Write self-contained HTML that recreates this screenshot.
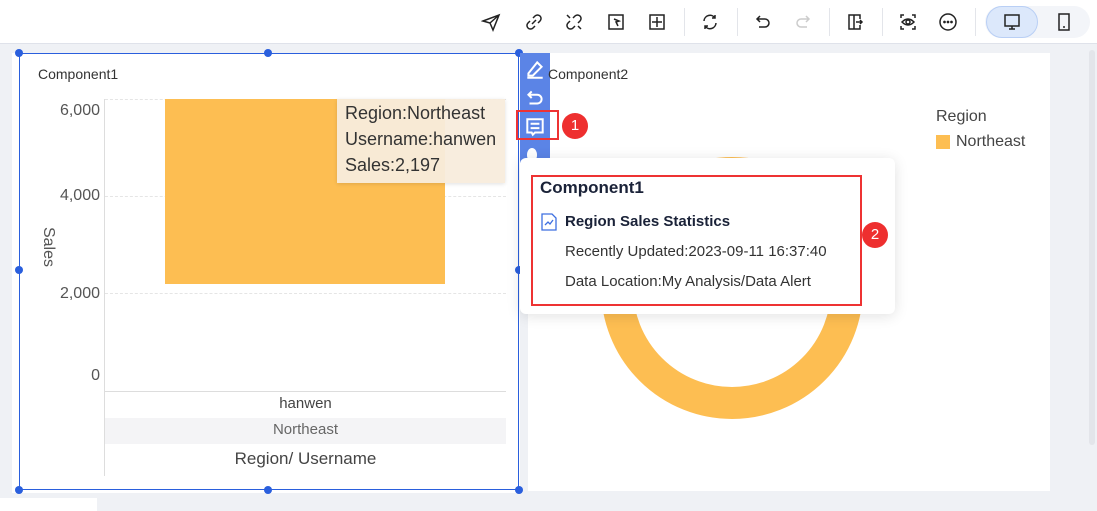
<!DOCTYPE html>
<html><head><style>
*{margin:0;padding:0;box-sizing:border-box}
body{width:1097px;height:511px;background:#eff1f5;font-family:"Liberation Sans",sans-serif;position:relative;overflow:hidden}
.abs{position:absolute}
.top{left:0;top:0;width:1097px;height:44px;background:#fff;border-bottom:1px solid #dfe2ea}
.ic{position:absolute;top:12px;width:20px;height:20px}
.sep{position:absolute;top:8px;width:1px;height:28px;background:#e3e5ea}
.t{color:#333;font-size:14px}
.h{width:8px;height:8px;border-radius:50%;background:#2a5fdd;position:absolute}
</style></head><body>
<div class="abs top">
<svg class="ic" style="left:481px" viewBox="0 0 20 20" fill="none" stroke="#222" stroke-width="1.5"><path d="M2 9 L18 3 L12 18 L9 11 Z M9 11 L18 3"/></svg>
<svg class="ic" style="left:524px" viewBox="0 0 20 20" fill="none" stroke="#222" stroke-width="1.5"><path d="M8 12 L12 8 M9 6 L11 4 a3 3 0 0 1 5 5 L14 11 M11 14 L9 16 a3 3 0 0 1 -5 -5 L6 9"/></svg>
<svg class="ic" style="left:564px" viewBox="0 0 20 20" fill="none" stroke="#222" stroke-width="1.5"><path d="M9 6 L11 4 a3 3 0 0 1 5 5 L14 11 M11 14 L9 16 a3 3 0 0 1 -5 -5 L6 9 M3 3 L6 6 M14 14 L17 17"/></svg>
<svg class="ic" style="left:606px" viewBox="0 0 20 20" fill="none" stroke="#222" stroke-width="1.5"><rect x="3" y="3" width="14" height="14"/><path d="M8 7 L13 9 L10 10 L12 14"/></svg>
<svg class="ic" style="left:647px" viewBox="0 0 20 20" fill="none" stroke="#222" stroke-width="1.5"><rect x="3" y="3" width="14" height="14"/><path d="M10 5 V15 M5 10 H15"/></svg>
<div class="sep" style="left:684px"></div>
<svg class="ic" style="left:700px" viewBox="0 0 20 20" fill="none" stroke="#222" stroke-width="1.5"><path d="M4 9 a6 6 0 0 1 11 -3 M16 11 a6 6 0 0 1 -11 3 M15 3 V6 H12 M5 17 V14 H8"/></svg>
<div class="sep" style="left:737px"></div>
<svg class="ic" style="left:753px" viewBox="0 0 20 20" fill="none" stroke="#222" stroke-width="1.5"><path d="M7 4 L4 7 L7 10 M4 7 H12 a4 4 0 0 1 0 8 H6"/></svg>
<svg class="ic" style="left:793px" viewBox="0 0 20 20" fill="none" stroke="#ccc" stroke-width="1.5"><path d="M13 4 L16 7 L13 10 M16 7 H8 a4 4 0 0 0 0 8 H14"/></svg>
<div class="sep" style="left:829px"></div>
<svg class="ic" style="left:845px" viewBox="0 0 20 20" fill="none" stroke="#222" stroke-width="1.5"><path d="M4 3 V17 H9 V3 Z M9 3 H15 V7 M9 17 H15 V13 M11 10 H17 M15 8 L17 10 L15 12"/></svg>
<div class="sep" style="left:882px"></div>
<svg class="ic" style="left:898px" viewBox="0 0 20 20" fill="none" stroke="#222" stroke-width="1.5"><path d="M3 6 V3 H6 M14 3 H17 V6 M17 14 V17 H14 M6 17 H3 V14 M4 10 Q10 4 16 10 Q10 16 4 10 Z"/><circle cx="10" cy="10" r="2"/></svg>
<svg class="ic" style="left:938px" viewBox="0 0 20 20" fill="none" stroke="#222" stroke-width="1.5"><circle cx="10" cy="10" r="8"/><circle cx="6.5" cy="10" r=".6" fill="#222"/><circle cx="10" cy="10" r=".6" fill="#222"/><circle cx="13.5" cy="10" r=".6" fill="#222"/></svg>
<div class="sep" style="left:975px"></div>
<div class="abs" style="left:985px;top:6px;width:105px;height:32px;border-radius:16px;background:#f3f5f9"></div>
<div class="abs" style="left:986px;top:6px;width:52px;height:32px;border-radius:16px;background:#dce8fb;border:1px solid #b9cff5"></div>
<svg class="ic" style="left:1002px" viewBox="0 0 20 20" fill="none" stroke="#222" stroke-width="1.5"><rect x="3" y="3" width="14" height="11"/><path d="M10 14 V17 M7 17 H13"/></svg>
<svg class="ic" style="left:1054px" viewBox="0 0 20 20" fill="none" stroke="#222" stroke-width="1.5"><rect x="5" y="2" width="10" height="16"/><path d="M9 15 H11"/></svg>
</div>
<div class="abs" style="left:12px;top:53px;width:508px;height:440px;background:#fff"></div>
<div class="abs" style="left:528px;top:53px;width:522px;height:438px;background:#fff"></div>
<div class="abs" style="left:1089px;top:50px;width:6px;height:395px;background:#e3e5ea;border-radius:3px"></div>
<div class="abs" style="left:0;top:498px;width:97px;height:13px;background:#fff"></div>
<div class="abs" style="left:19px;top:53px;width:500px;height:437px;border:1px solid #2a5fdd"></div>
<div class="h" style="left:15px;top:49px"></div><div class="h" style="left:264px;top:49px"></div><div class="h" style="left:515px;top:49px"></div>
<div class="h" style="left:15px;top:266px"></div><div class="h" style="left:515px;top:266px"></div>
<div class="h" style="left:15px;top:486px"></div><div class="h" style="left:264px;top:486px"></div><div class="h" style="left:515px;top:486px"></div>
<div class="abs t" style="left:38px;top:66px">Component1</div>
<div class="abs" style="left:105px;top:99px;width:401px;border-top:1px dashed #e5e5e5"></div>
<div class="abs" style="left:105px;top:196px;width:401px;border-top:1px dashed #e5e5e5"></div>
<div class="abs" style="left:105px;top:293px;width:401px;border-top:1px dashed #e5e5e5"></div>
<div class="abs" style="left:104px;top:99px;width:1px;height:377px;background:#ddd"></div>
<div class="abs" style="left:105px;top:391px;width:401px;height:1px;background:#ddd"></div>
<div class="abs" style="left:40px;top:102px;width:60px;text-align:right;font-size:16px;color:#555">6,000</div>
<div class="abs" style="left:40px;top:187px;width:60px;text-align:right;font-size:16px;color:#555">4,000</div>
<div class="abs" style="left:40px;top:285px;width:60px;text-align:right;font-size:16px;color:#555">2,000</div>
<div class="abs" style="left:40px;top:367px;width:60px;text-align:right;font-size:16px;color:#555">0</div>
<div class="abs" style="left:28px;top:238px;font-size:16px;color:#555;transform:rotate(90deg)">Sales</div>
<div class="abs" style="left:165px;top:99px;width:280px;height:185px;background:#fdbe52"></div>
<div class="abs" style="left:337px;top:99px;width:168px;height:84px;background:rgba(248,236,220,.95);box-shadow:0 1px 4px rgba(0,0,0,.12);font-size:18px;color:#333;line-height:26px;padding:1px 0 0 8px">Region:Northeast<br>Username:hanwen<br>Sales:2,197</div>
<div class="abs" style="left:105px;top:395px;width:401px;text-align:center;font-size:15px;color:#444">hanwen</div>
<div class="abs" style="left:105px;top:418px;width:401px;height:26px;background:#f4f4f6;text-align:center;font-size:15px;color:#666;line-height:24px">Northeast</div>
<div class="abs" style="left:105px;top:449px;width:401px;text-align:center;font-size:17px;color:#444">Region/ Username</div>
<div class="abs" style="left:520px;top:53px;width:30px;height:110px;background:#5b84e6"></div>
<svg class="abs" style="left:524px;top:58px" width="22" height="22" viewBox="0 0 20 20" fill="none" stroke="#fff" stroke-width="1.8"><path d="M4 14 L12 4 L16 8 L8 16 H4 Z M3 18 H17"/></svg>
<svg class="abs" style="left:524px;top:87px" width="22" height="22" viewBox="0 0 20 20" fill="none" stroke="#fff" stroke-width="1.8"><path d="M7 4 L4 7 L7 10 M4 7 H12 a4 4 0 0 1 0 8 H5"/></svg>
<svg class="abs" style="left:524px;top:116px" width="22" height="22" viewBox="0 0 20 20" fill="none" stroke="#fff" stroke-width="1.8"><path d="M3 3 H17 V15 H10 L8 17 L7 15 H3 Z M6 7 H14 M6 11 H14"/></svg>
<div class="abs" style="left:516px;top:110px;width:43px;height:30px;border:2px solid #ee3333"></div>
<div class="abs" style="left:562px;top:113px;width:26px;height:26px;border-radius:50%;background:#ee2f2f;color:#fff;font-size:15px;text-align:center;line-height:26px">1</div>
<div class="abs t" style="left:548px;top:66px">Component2</div>
<div class="abs" style="left:936px;top:108px;font-size:16px;color:#444">Region</div>
<div class="abs" style="left:936px;top:135px;width:14px;height:14px;background:#fdbe52"></div>
<div class="abs" style="left:956px;top:133px;font-size:16px;color:#444">Northeast</div>
<div class="abs" style="left:601px;top:157px;width:262px;height:262px;border-radius:50%;border:32px solid #fdbe52"></div>
<div class="abs" style="left:527px;top:148px;width:10px;height:14px;border-radius:50%;background:#fff"></div>
<div class="abs" style="left:520px;top:158px;width:375px;height:156px;background:#fff;border-radius:6px;box-shadow:0 2px 14px rgba(0,0,0,.12)"></div>
<div class="abs" style="left:531px;top:175px;width:331px;height:131px;border:2px solid #ee3333"></div>
<div class="abs" style="left:540px;top:178px;font-size:17px;font-weight:bold;color:#1a2238">Component1</div>
<svg class="abs" style="left:541px;top:213px" width="16" height="18" viewBox="0 0 16 18" fill="none" stroke="#3d6fe0" stroke-width="1.3"><path d="M1 1 H11 L15 5 V17 H1 Z M4 12 L7 9 L9 11 L12 7"/></svg>
<div class="abs" style="left:565px;top:213px;font-size:15px;font-weight:bold;color:#1a2238">Region Sales Statistics</div>
<div class="abs" style="left:565px;top:243px;font-size:15px;color:#333">Recently Updated:2023-09-11 16:37:40</div>
<div class="abs" style="left:565px;top:273px;font-size:15px;color:#333">Data Location:My Analysis/Data Alert</div>
<div class="abs" style="left:862px;top:222px;width:26px;height:26px;border-radius:50%;background:#ee2f2f;color:#fff;font-size:15px;text-align:center;line-height:26px">2</div>
</body></html>
